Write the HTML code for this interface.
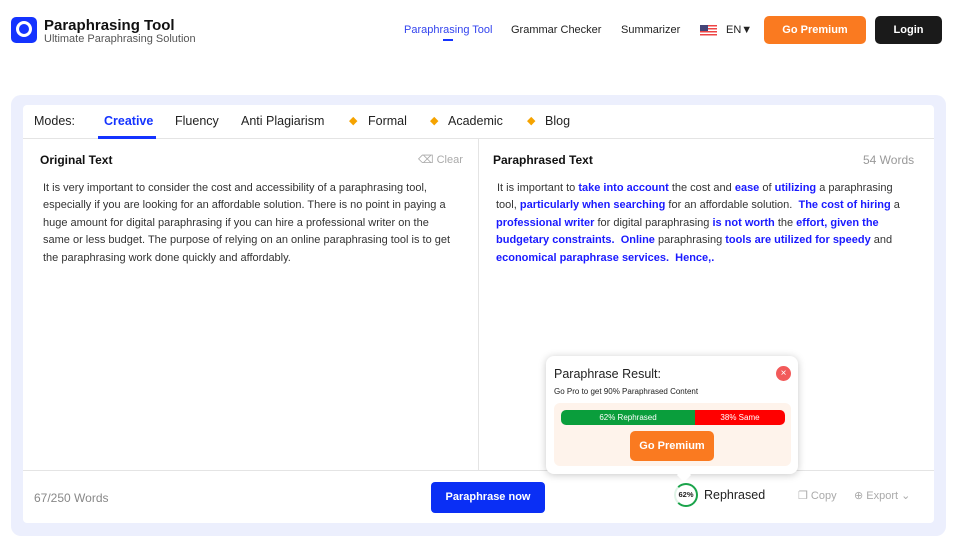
<!DOCTYPE html><html><head><meta charset="utf-8"><style>
*{margin:0;padding:0;box-sizing:border-box}
body{width:975px;height:551px;background:#fff;font-family:"Liberation Sans",sans-serif;position:relative;overflow:hidden;color:#222}
.a{position:absolute;white-space:nowrap}
.t{font-size:11px;color:#333}
.b{color:#1a1aff;font-weight:bold}
</style></head><body>
<div class="a" style="left:11px;top:17px;width:26px;height:26px;background:#1433ff;border-radius:5px"></div>
<div class="a" style="left:16px;top:21px;width:16px;height:16px;border:3px solid #fff;border-radius:50%"></div>
<div class="a" style="left:44px;top:17px;font-size:15px;font-weight:bold;color:#111">Paraphrasing Tool</div>
<div class="a" style="left:44px;top:33px;font-size:11px;color:#555">Ultimate Paraphrasing Solution</div>
<div class="a" style="left:404px;top:24px;font-size:11px;color:#3344ee">Paraphrasing Tool</div>
<div class="a" style="left:443px;top:39px;width:10px;height:2px;background:#1433ff"></div>
<div class="a" style="left:511px;top:24px;font-size:11px;color:#222">Grammar Checker</div>
<div class="a" style="left:621px;top:24px;font-size:11px;color:#222">Summarizer</div>
<div class="a" style="left:700px;top:25px;width:17px;height:11px;background:repeating-linear-gradient(#e44 0 1.5px,#fff 1.5px 3px)"><div style="width:8px;height:6px;background:#447"></div></div>
<div class="a" style="left:726px;top:24px;font-size:11px;color:#222">EN▼</div>
<div class="a" style="left:764px;top:16px;width:102px;height:28px;background:#fa7a20;border-radius:5px;color:#fff;font-size:11px;font-weight:bold;text-align:center;line-height:28px">Go Premium</div>
<div class="a" style="left:875px;top:16px;width:67px;height:28px;background:#1a1a1a;border-radius:5px;color:#fff;font-size:11px;font-weight:bold;text-align:center;line-height:28px">Login</div>
<div class="a" style="left:11px;top:95px;width:935px;height:441px;background:#eceffd;border-radius:10px"></div>
<div class="a" style="left:23px;top:105px;width:911px;height:418px;background:#fff;border-radius:4px"></div>
<div class="a" style="left:23px;top:138px;width:911px;height:1px;background:#e4e4e4"></div>
<div class="a" style="left:478px;top:139px;width:1px;height:331px;background:#e4e4e4"></div>
<div class="a" style="left:23px;top:470px;width:911px;height:1px;background:#e4e4e4"></div>
<div class="a" style="left:34px;top:114px;font-size:12.5px">Modes:</div>
<div class="a" style="left:104px;top:114px;font-size:12.5px;color:#1433ff;font-weight:bold">Creative</div>
<div class="a" style="left:98px;top:136px;width:58px;height:3px;background:#1433ff"></div>
<div class="a" style="left:175px;top:114px;font-size:12.5px">Fluency</div>
<div class="a" style="left:241px;top:114px;font-size:12.5px">Anti Plagiarism</div>
<div class="a" style="left:349px;top:114px;font-size:11px;color:#f5a300">◆</div><div class="a" style="left:368px;top:114px;font-size:12.5px">Formal</div>
<div class="a" style="left:430px;top:114px;font-size:11px;color:#f5a300">◆</div><div class="a" style="left:448px;top:114px;font-size:12.5px">Academic</div>
<div class="a" style="left:527px;top:114px;font-size:11px;color:#f5a300">◆</div><div class="a" style="left:545px;top:114px;font-size:12.5px">Blog</div>
<div class="a" style="left:40px;top:153px;font-size:12px;font-weight:bold;color:#111">Original Text</div>
<div class="a" style="left:418px;top:153px;font-size:11px;color:#aaa">⌫ Clear</div>
<div class="a" style="left:493px;top:153px;font-size:12px;font-weight:bold;color:#111">Paraphrased Text</div>
<div class="a" style="left:863px;top:153px;font-size:12px;color:#999">54 Words</div>
<div class="a t" style="left:43px;top:182px">It is very important to consider the cost and accessibility of a paraphrasing tool,</div>
<div class="a t" style="left:43px;top:199px">especially if you are looking for an affordable solution. There is no point in paying a</div>
<div class="a t" style="left:43px;top:217px">huge amount for digital paraphrasing if you can hire a professional writer on the</div>
<div class="a t" style="left:43px;top:234px">same or less budget. The purpose of relying on an online paraphrasing tool is to get</div>
<div class="a t" style="left:43px;top:252px">the paraphrasing work done quickly and affordably.</div>
<div class="a t" style="left:497px;top:182px">It is important to <span class="b">take into account</span> the cost and <span class="b">ease</span> of <span class="b">utilizing</span> a paraphrasing</div>
<div class="a t" style="left:496px;top:199px">tool, <span class="b">particularly when searching</span> for an affordable solution. &nbsp;<span class="b">The cost of hiring</span> a</div>
<div class="a t" style="left:496px;top:217px"><span class="b">professional writer</span> for digital paraphrasing <span class="b">is not worth</span> the <span class="b">effort, given the</span></div>
<div class="a t" style="left:496px;top:234px"><span class="b">budgetary constraints. &nbsp;Online</span> paraphrasing <span class="b">tools are utilized for speedy</span> and</div>
<div class="a t" style="left:496px;top:252px"><span class="b">economical paraphrase services. &nbsp;Hence,.</span></div>
<div class="a" style="left:34px;top:491px;font-size:12px;color:#888">67/250 Words</div>
<div class="a" style="left:431px;top:482px;width:114px;height:31px;background:#0a2ff5;border-radius:4px;color:#fff;font-size:11px;font-weight:bold;text-align:center;line-height:31px">Paraphrase now</div>
<div class="a" style="left:674px;top:483px;width:24px;height:24px;border-radius:50%;border:2.5px solid #1aa34a;border-left-color:#dff3e6;font-size:7.5px;font-weight:bold;text-align:center;line-height:19px">62%</div>
<div class="a" style="left:704px;top:488px;font-size:12.5px;color:#222">Rephrased</div>
<div class="a" style="left:798px;top:489px;font-size:11px;color:#aaa">❐ Copy</div>
<div class="a" style="left:854px;top:489px;font-size:11px;color:#aaa">⊕ Export ⌄</div>
<div class="a" style="left:546px;top:356px;width:252px;height:118px;background:#fff;border-radius:8px;box-shadow:0 1px 8px rgba(0,0,0,.22)"></div>
<div class="a" style="left:679px;top:470px;width:10px;height:10px;background:#fff;transform:rotate(45deg)"></div>
<div class="a" style="left:554px;top:367px;font-size:12.5px;color:#222">Paraphrase Result:</div>
<div class="a" style="left:776px;top:366px;width:15px;height:15px;border-radius:50%;background:#f25a5a;color:#fff;font-size:10px;text-align:center;line-height:15px">×</div>
<div class="a" style="left:554px;top:387px;font-size:8px;color:#222">Go Pro to get 90% Paraphrased Content</div>
<div class="a" style="left:554px;top:403px;width:237px;height:63px;background:#fef3eb;border-radius:6px"></div>
<div class="a" style="left:561px;top:410px;width:134px;height:15px;background:#0a9e3c;border-radius:5px 0 0 5px;color:#fff;font-size:8px;text-align:center;line-height:15px">62% Rephrased</div>
<div class="a" style="left:695px;top:410px;width:90px;height:15px;background:#f00;border-radius:0 5px 5px 0;color:#fff;font-size:8px;text-align:center;line-height:15px">38% Same</div>
<div class="a" style="left:630px;top:431px;width:84px;height:30px;background:#fa7a20;border-radius:5px;color:#fff;font-size:11px;font-weight:bold;text-align:center;line-height:30px">Go Premium</div>
</body></html>
